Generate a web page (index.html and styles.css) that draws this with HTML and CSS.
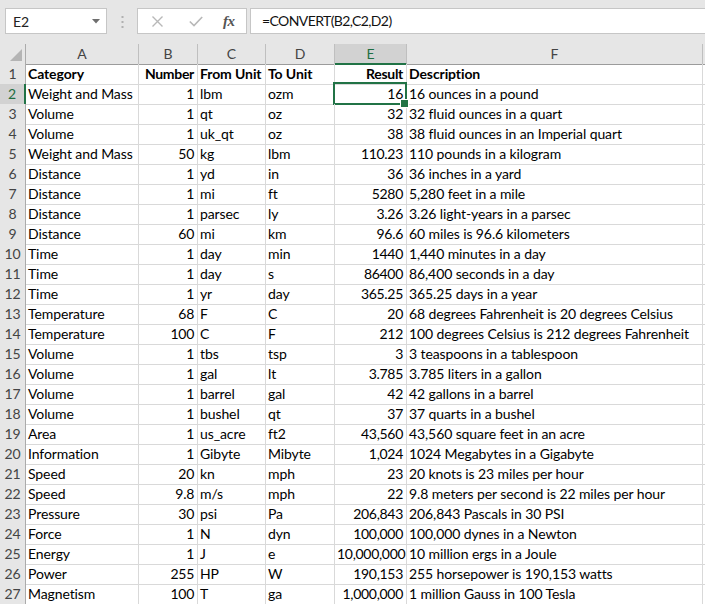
FILE: index.html
```html
<!DOCTYPE html>
<html>
<head>
<meta charset="utf-8">
<link rel="stylesheet" href="styles.css">
</head>
<body>
<div class="app">
  <div class="fbar">
    <div class="namebox">
      <span>E2</span>
      <svg class="dd" width="8" height="5" viewBox="0 0 8 5"><path d="M0 0H8L4 4.5Z" fill="#6e6e6e"/></svg>
    </div>
    <svg class="grip" width="3" height="12" viewBox="0 0 3 12"><rect x="0.5" y="0" width="2" height="2" fill="#b0b0b0"/><rect x="0.5" y="5" width="2" height="2" fill="#b0b0b0"/><rect x="0.5" y="10" width="2" height="2" fill="#b0b0b0"/></svg>
    <div class="fbtns">
      <svg width="11" height="11" viewBox="0 0 11 11"><path d="M0.5 0.5L10.5 10.5M10.5 0.5L0.5 10.5" stroke="#b8b8b8" stroke-width="1.4"/></svg>
      <svg width="14" height="11" viewBox="0 0 14 11"><path d="M0.8 5.5L5 9.6L13.2 1" stroke="#b8b8b8" stroke-width="1.6" fill="none"/></svg>
      <span class="fx">fx</span>
    </div>
    <div class="finput">=CONVERT(B2,C2,D2)</div>
  </div>
  <div class="sheet">
    <div class="row hdr"><div class="corner"><svg width="12" height="12" viewBox="0 0 12 12"><path d="M12 0V12H0Z" fill="#b4b4b4"/></svg></div><div class="ch">A</div><div class="ch">B</div><div class="ch">C</div><div class="ch">D</div><div class="ch sel">E</div><div class="ch">F</div><div class="ch end"></div></div>
    <div class="row"><div class="rh">1</div><div class="c b">Category</div><div class="c b n">Number</div><div class="c b">From Unit</div><div class="c b">To Unit</div><div class="c b n">Result</div><div class="c b">Description</div><div class="c end"></div></div>
    <div class="row"><div class="rh sel">2</div><div class="c">Weight and Mass</div><div class="c n">1</div><div class="c">lbm</div><div class="c">ozm</div><div class="c n active">16</div><div class="c">16 ounces in a pound</div><div class="c end"></div></div>
    <div class="row"><div class="rh">3</div><div class="c">Volume</div><div class="c n">1</div><div class="c">qt</div><div class="c">oz</div><div class="c n">32</div><div class="c">32 fluid ounces in a quart</div><div class="c end"></div></div>
    <div class="row"><div class="rh">4</div><div class="c">Volume</div><div class="c n">1</div><div class="c">uk_qt</div><div class="c">oz</div><div class="c n">38</div><div class="c">38 fluid ounces in an Imperial quart</div><div class="c end"></div></div>
    <div class="row"><div class="rh">5</div><div class="c">Weight and Mass</div><div class="c n">50</div><div class="c">kg</div><div class="c">lbm</div><div class="c n">110.23</div><div class="c">110 pounds in a kilogram</div><div class="c end"></div></div>
    <div class="row"><div class="rh">6</div><div class="c">Distance</div><div class="c n">1</div><div class="c">yd</div><div class="c">in</div><div class="c n">36</div><div class="c">36 inches in a yard</div><div class="c end"></div></div>
    <div class="row"><div class="rh">7</div><div class="c">Distance</div><div class="c n">1</div><div class="c">mi</div><div class="c">ft</div><div class="c n">5280</div><div class="c">5,280 feet in a mile</div><div class="c end"></div></div>
    <div class="row"><div class="rh">8</div><div class="c">Distance</div><div class="c n">1</div><div class="c">parsec</div><div class="c">ly</div><div class="c n">3.26</div><div class="c">3.26 light-years in a parsec</div><div class="c end"></div></div>
    <div class="row"><div class="rh">9</div><div class="c">Distance</div><div class="c n">60</div><div class="c">mi</div><div class="c">km</div><div class="c n">96.6</div><div class="c">60 miles is 96.6 kilometers</div><div class="c end"></div></div>
    <div class="row"><div class="rh">10</div><div class="c">Time</div><div class="c n">1</div><div class="c">day</div><div class="c">min</div><div class="c n">1440</div><div class="c">1,440 minutes in a day</div><div class="c end"></div></div>
    <div class="row"><div class="rh">11</div><div class="c">Time</div><div class="c n">1</div><div class="c">day</div><div class="c">s</div><div class="c n">86400</div><div class="c">86,400 seconds in a day</div><div class="c end"></div></div>
    <div class="row"><div class="rh">12</div><div class="c">Time</div><div class="c n">1</div><div class="c">yr</div><div class="c">day</div><div class="c n">365.25</div><div class="c">365.25 days in a year</div><div class="c end"></div></div>
    <div class="row"><div class="rh">13</div><div class="c">Temperature</div><div class="c n">68</div><div class="c">F</div><div class="c">C</div><div class="c n">20</div><div class="c">68 degrees Fahrenheit is 20 degrees Celsius</div><div class="c end"></div></div>
    <div class="row"><div class="rh">14</div><div class="c">Temperature</div><div class="c n">100</div><div class="c">C</div><div class="c">F</div><div class="c n">212</div><div class="c">100 degrees Celsius is 212 degrees Fahrenheit</div><div class="c end"></div></div>
    <div class="row"><div class="rh">15</div><div class="c">Volume</div><div class="c n">1</div><div class="c">tbs</div><div class="c">tsp</div><div class="c n">3</div><div class="c">3 teaspoons in a tablespoon</div><div class="c end"></div></div>
    <div class="row"><div class="rh">16</div><div class="c">Volume</div><div class="c n">1</div><div class="c">gal</div><div class="c">lt</div><div class="c n">3.785</div><div class="c">3.785 liters in a gallon</div><div class="c end"></div></div>
    <div class="row"><div class="rh">17</div><div class="c">Volume</div><div class="c n">1</div><div class="c">barrel</div><div class="c">gal</div><div class="c n">42</div><div class="c">42 gallons in a barrel</div><div class="c end"></div></div>
    <div class="row"><div class="rh">18</div><div class="c">Volume</div><div class="c n">1</div><div class="c">bushel</div><div class="c">qt</div><div class="c n">37</div><div class="c">37 quarts in a bushel</div><div class="c end"></div></div>
    <div class="row"><div class="rh">19</div><div class="c">Area</div><div class="c n">1</div><div class="c">us_acre</div><div class="c">ft2</div><div class="c n">43,560</div><div class="c">43,560 square feet in an acre</div><div class="c end"></div></div>
    <div class="row"><div class="rh">20</div><div class="c">Information</div><div class="c n">1</div><div class="c">Gibyte</div><div class="c">Mibyte</div><div class="c n">1,024</div><div class="c">1024 Megabytes in a Gigabyte</div><div class="c end"></div></div>
    <div class="row"><div class="rh">21</div><div class="c">Speed</div><div class="c n">20</div><div class="c">kn</div><div class="c">mph</div><div class="c n">23</div><div class="c">20 knots is 23 miles per hour</div><div class="c end"></div></div>
    <div class="row"><div class="rh">22</div><div class="c">Speed</div><div class="c n">9.8</div><div class="c">m/s</div><div class="c">mph</div><div class="c n">22</div><div class="c">9.8 meters per second is 22 miles per hour</div><div class="c end"></div></div>
    <div class="row"><div class="rh">23</div><div class="c">Pressure</div><div class="c n">30</div><div class="c">psi</div><div class="c">Pa</div><div class="c n">206,843</div><div class="c">206,843 Pascals in 30 PSI</div><div class="c end"></div></div>
    <div class="row"><div class="rh">24</div><div class="c">Force</div><div class="c n">1</div><div class="c">N</div><div class="c">dyn</div><div class="c n">100,000</div><div class="c">100,000 dynes in a Newton</div><div class="c end"></div></div>
    <div class="row"><div class="rh">25</div><div class="c">Energy</div><div class="c n">1</div><div class="c">J</div><div class="c">e</div><div class="c n">10,000,000</div><div class="c">10 million ergs in a Joule</div><div class="c end"></div></div>
    <div class="row"><div class="rh">26</div><div class="c">Power</div><div class="c n">255</div><div class="c">HP</div><div class="c">W</div><div class="c n">190,153</div><div class="c">255 horsepower is 190,153 watts</div><div class="c end"></div></div>
    <div class="row"><div class="rh">27</div><div class="c">Magnetism</div><div class="c n">100</div><div class="c">T</div><div class="c">ga</div><div class="c n">1,000,000</div><div class="c">1 million Gauss in 100 Tesla</div><div class="c end"></div></div>
  </div>
</div>
</body>
</html>
```
FILE: styles.css
```css
* { box-sizing: border-box; }
html, body { margin: 0; padding: 0; background: #fff; }
body { font-family: Lato, "Open Sans", sans-serif; font-size: 14px; letter-spacing: -0.1px; color: #000; overflow: hidden; }
.app { width: 705px; height: 604px; overflow: hidden; }

.fbar {
  height: 44px;
  background: #e6e6e6;
  display: flex;
  align-items: flex-start;
  padding: 8px 0 0 5px;
}
.namebox {
  width: 102px;
  height: 26px;
  background: #fff;
  border: 1px solid #c6c6c6;
  display: flex;
  align-items: center;
  justify-content: space-between;
  padding: 0 6px 0 7px;
  color: #222;
}
.namebox .dd { margin-top: 1px; }
.grip { margin: 8px 0 0 14px; }
.fbtns {
  margin-left: 13px;
  width: 110px;
  height: 26px;
  background: #fff;
  border: 1px solid #c6c6c6;
  display: flex;
  align-items: center;
  padding-left: 14px;
}
.fbtns svg:first-child { margin-right: 26px; }
.fbtns svg:nth-child(2) { margin-right: 20px; }
.fx { font-family: "Liberation Serif", serif; font-style: italic; font-size: 15px; color: #555; font-weight: bold; letter-spacing: -0.5px; }
.finput {
  margin-left: 3px;
  flex: 1;
  height: 26px;
  background: #fff;
  border: 1px solid #c6c6c6;
  border-right: none;
  padding-left: 11px;
  line-height: 24px;
  color: #111;
  letter-spacing: -0.6px;
}

.row {
  display: grid;
  grid-template-columns: 26px 113px 59px 68px 69px 72px 296px 2px;
  height: 20px;
}
.hdr { background: #e6e6e6; }
.corner, .ch {
  border-right: 1px solid #bfbfbf;
  border-bottom: 1px solid #9b9b9b;
  color: #444;
  text-align: center;
  line-height: 19px;
}
.corner { display: flex; align-items: flex-end; justify-content: flex-end; padding: 0 3px 3px 0; border-right-color: #ababab; }
.ch.sel { background: #d2d2d2; color: #1e6e42; border-bottom: 2px solid #217346; }
.ch.end { border-right: none; }

.rh {
  background: #e6e6e6;
  border-right: 1px solid #ababab;
  border-bottom: 1px solid #d0d0d0;
  color: #444;
  text-align: center;
  line-height: 20px;
}
.rh.sel { background: #d2d2d2; color: #1e6e42; border-right: 2px solid #217346; }
.c {
  border-right: 1px solid #d9d9d9;
  border-bottom: 1px solid #d9d9d9;
  padding: 0 3px 0 2px;
  white-space: nowrap;
  line-height: 20px;
  position: relative;
}
.c.end { border-right: none; }
.n { text-align: right; letter-spacing: -0.3px; }
.b { font-weight: bold; }
.active::after {
  content: "";
  position: absolute;
  left: -2px; top: -2px; right: -1px; bottom: -1px;
  border: 2px solid #217346;
}
.active::before {
  content: "";
  position: absolute;
  right: -3px; bottom: -4px;
  width: 7px; height: 7px;
  background: #217346;
  border: 1px solid #fff;
  z-index: 2;
}
```
